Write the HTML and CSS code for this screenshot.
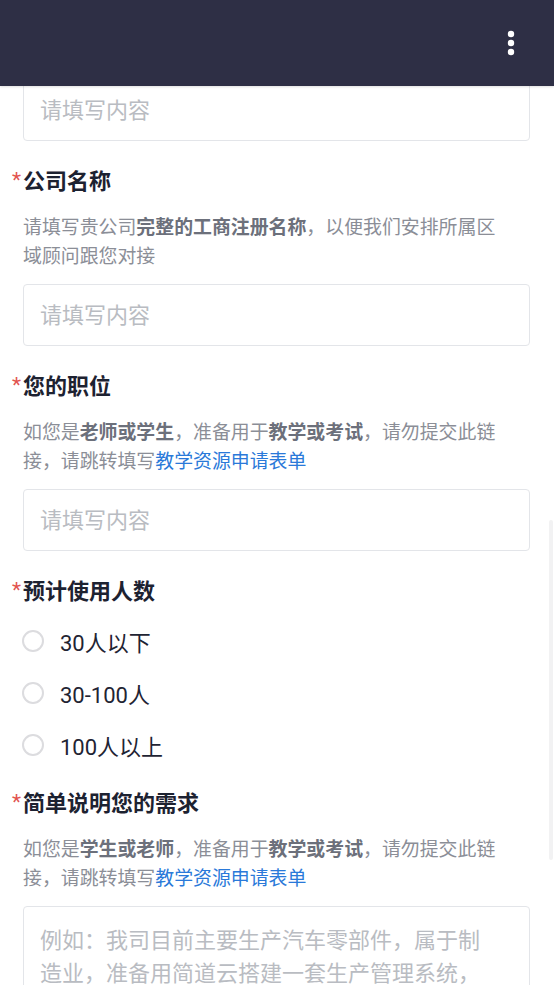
FILE: index.html
```html
<!DOCTYPE html>
<html lang="zh">
<head>
<meta charset="utf-8">
<title>表单</title>
<link rel="stylesheet" href="styles.css">
</head>
<body>
<header class="topbar">
  <button class="more" aria-label="更多">
    <svg width="8" height="26" viewBox="0 0 8 26"><circle cx="4" cy="4" r="3.2" fill="#fff"/><circle cx="4" cy="13" r="3.2" fill="#fff"/><circle cx="4" cy="22" r="3.2" fill="#fff"/></svg>
  </button>
</header>
<div class="scroll-thumb"></div>
<main class="form">
  <section class="field">
    <input class="text-input" type="text" placeholder="请填写内容">
  </section>

  <section class="field">
    <div class="label"><span class="req">*</span>公司名称</div>
    <p class="desc"><span>请填写贵公司</span><b>完整的工商注册名称</b><span>，以便我们安排所属区</span><span>域顾问跟您对接</span></p>
    <input class="text-input" type="text" placeholder="请填写内容">
  </section>

  <section class="field">
    <div class="label"><span class="req">*</span>您的职位</div>
    <p class="desc"><span>如您是</span><b>老师或学生</b><span>，准备用于</span><b>教学或考试</b><span>，请勿提交此链</span><span>接，请跳转填写</span><a class="link" href="#">教学资源申请表单</a></p>
    <input class="text-input" type="text" placeholder="请填写内容">
  </section>

  <section class="field field-radio">
    <div class="label"><span class="req">*</span>预计使用人数</div>
    <div class="radios">
      <label class="radio"><span class="circle"></span><span>30人以下</span></label>
      <label class="radio"><span class="circle"></span><span>30-100人</span></label>
      <label class="radio"><span class="circle"></span><span>100人以上</span></label>
    </div>
  </section>

  <section class="field">
    <div class="label"><span class="req">*</span>简单说明您的需求</div>
    <p class="desc"><span>如您是</span><b>学生或老师</b><span>，准备用于</span><b>教学或考试</b><span>，请勿提交此链</span><span>接，请跳转填写</span><a class="link" href="#">教学资源申请表单</a></p>
    <textarea class="text-area" placeholder="例如：我司目前主要生产汽车零部件，属于制造业，准备用简道云搭建一套生产管理系统，实现生产计划、物料管理、质量追溯等功能"></textarea>
  </section>
</main>
</body>
</html>
```

FILE: styles.css
```css
html, body {
  margin: 0;
  padding: 0;
  background: #ffffff;
}
body {
  font-family: Roboto, "Noto Sans CJK SC", "Noto Sans", sans-serif;
  color: #1f2433;
  overflow: hidden;
}
.topbar {
  position: fixed;
  top: 0;
  left: 0;
  right: 0;
  height: 86px;
  background: #2e2f45;
  box-shadow: 0 1px 2px rgba(0,0,0,0.12);
  display: flex;
  justify-content: flex-end;
  align-items: flex-start;
  z-index: 10;
}
.more {
  margin: 30px 39px 0 0;
  padding: 0;
  border: 0;
  background: transparent;
  width: 8px;
  height: 26px;
  display: block;
}
.more svg { display: block; }

.scroll-thumb {
  position: fixed;
  right: 1px;
  top: 520px;
  width: 4px;
  height: 340px;
  background: #f2f2f3;
  border-radius: 2px;
  z-index: 5;
}

.form {
  padding: 79px 24px 0 23px;
}
.field {
  margin: 0 0 25px 0;
}
.field-radio {
  margin-bottom: 17px;
}
.label {
  font-size: 22px;
  line-height: 32px;
  font-weight: 700;
  color: #1d2231;
}
.req {
  display: inline-block;
  width: 11px;
  margin-left: -11px;
  color: #e2544f;
  font-weight: 400;
  font-size: 21px;
  text-align: left;
  position: relative;
  top: -2px;
}
.desc {
  margin: 15px 0 13px 0;
  font-size: 18.9px;
  line-height: 29px;
  color: #8b8e97;
  max-width: 486px;
}
.desc b {
  color: #6c707b;
  font-weight: 700;
}
.link {
  color: #2a79d9;
  text-decoration: none;
}
.text-input,
.text-area {
  display: block;
  box-sizing: border-box;
  width: 100%;
  border: 1px solid #e3e5e9;
  border-radius: 4px;
  font-family: inherit;
  font-size: 22px;
  color: #1f2433;
  background: #fff;
  outline: none;
  margin: 0;
}
.text-input {
  height: 62px;
  padding: 0 16px;
}
.text-area {
  height: 170px;
  padding: 17px 40px 0 16px;
  line-height: 33px;
  resize: none;
}
.text-input::placeholder,
.text-area::placeholder {
  color: #b9bcc2;
  opacity: 1;
}
.radios {
  display: flex;
  flex-direction: column;
  margin-top: 7px;
}
.radio {
  display: flex;
  align-items: center;
  height: 52px;
  font-size: 22px;
  color: #1f2433;
  gap: 16px;
}
.circle {
  box-sizing: border-box;
  width: 22px;
  height: 22px;
  border: 2px solid #dcdcdf;
  border-radius: 50%;
  margin-left: -1px;
  flex: none;
}
```
